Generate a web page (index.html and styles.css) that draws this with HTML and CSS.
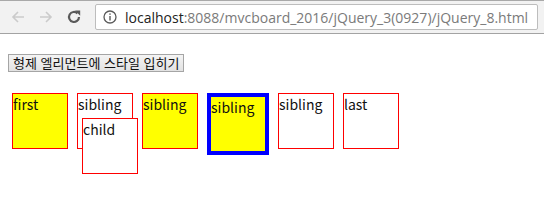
FILE: index.html
```html
<!DOCTYPE html>
<html lang="ko">
<head>
    <meta charset="UTF-8">
    <title>jQuery_8</title>
    <link rel="stylesheet" href="styles.css">
</head>
<body>
    <div class="toolbar">
        <div class="nav">
            <svg class="nav-icon" width="16" height="16" viewBox="0 0 16 16">
                <path d="M14 8H3M8 3L3 8l5 5" fill="none" stroke="#cbcbcb" stroke-width="1.6"/>
            </svg>
            <svg class="nav-icon" width="16" height="16" viewBox="0 0 16 16">
                <path d="M2 8h11M8 3l5 5-5 5" fill="none" stroke="#cbcbcb" stroke-width="1.6"/>
            </svg>
            <svg class="nav-icon" width="16" height="16" viewBox="0 0 16 16">
                <path d="M13 8a5 5 0 1 1-1.5-3.6" fill="none" stroke="#5a5a5a" stroke-width="2.2"/>
                <path d="M9 1.5h5.2v5.2z" fill="#5a5a5a"/>
            </svg>
        </div>
        <div class="omnibox">
            <svg class="info-icon" width="14" height="14" viewBox="0 0 14 14">
                <circle cx="7" cy="7" r="6" fill="none" stroke="#5a5a5a" stroke-width="1.3"/>
                <rect x="6.3" y="6" width="1.4" height="4.5" fill="#5a5a5a"/>
                <rect x="6.3" y="3.4" width="1.4" height="1.4" fill="#5a5a5a"/>
            </svg>
            <span class="url"><span class="host">localhost</span>:8088/mvcboard_2016/jQuery_3(0927)/jQuery_8.html</span>
        </div>
    </div>

    <div class="page">
        <button class="style-btn">형제 엘리먼트에 스타일 입히기</button>
        <div class="boxes">
            <div class="box yellow">first</div>
            <div class="box">sibling
                <div class="box child">child</div>
            </div>
            <div class="box yellow">sibling</div>
            <div class="box yellow selected">sibling</div>
            <div class="box">sibling</div>
            <div class="box">last</div>
        </div>
    </div>
</body>
</html>
```

FILE: styles.css
```css
body {
    margin: 0;
    background: #fff;
    font-family: "Noto Sans CJK KR", "Noto Sans", sans-serif;
}

.toolbar {
    height: 34px;
    display: flex;
    align-items: center;
    background-color: #f2f2f2;
    border-top: 1px solid #a9a9a9;
    border-bottom: 1px solid #a3a3a3;
    box-sizing: border-box;
}

.nav {
    display: flex;
    align-items: center;
    gap: 12px;
    padding-left: 10px;
    width: 82px;
}

.omnibox {
    flex: 1;
    margin-left: 3px;
    margin-right: 6px;
    height: 26px;
    display: flex;
    align-items: center;
    background-color: #fff;
    border: 1px solid #bdbdbd;
    border-radius: 2px;
    box-sizing: border-box;
}

.info-icon {
    margin-left: 7px;
    margin-right: 8px;
}

.url {
    font-family: "Open Sans", "Noto Sans", sans-serif;
    font-size: 14px;
    color: #7a7a7a;
    white-space: nowrap;
}

.host {
    color: #222;
}

.page {
    padding: 20px 8px;
}

.style-btn {
    display: block;
    height: 18px;
    padding: 0 4px;
    font-family: "Noto Sans CJK KR", sans-serif;
    font-size: 13px;
    line-height: 14px;
    color: #111;
    background: linear-gradient(#f4f4f4, #e2e2e2);
    border: 1px solid #a5a5a5;
    border-radius: 0;
}

.boxes {
    display: flex;
    align-items: flex-start;
    gap: 9px;
    margin-top: 21px;
    margin-left: 4px;
}

.box {
    width: 54px;
    height: 54px;
    border: 1px solid #f00;
    background-color: #fff;
    font-size: 14px;
    line-height: 20px;
    color: #111;
    flex-shrink: 0;
}

.yellow {
    background-color: #ff0;
}

.selected {
    border: 4px solid #00f;
}

.child {
    margin: 4px 0 0 4px;
}
```
